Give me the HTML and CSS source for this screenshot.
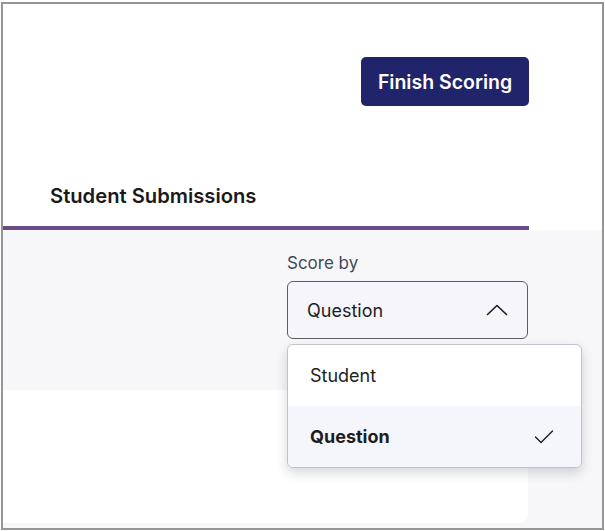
FILE: index.html
```html
<!DOCTYPE html>
<html lang="en">
<head>
<meta charset="utf-8">
<title>Student Submissions</title>
<link rel="stylesheet" href="styles.css">
</head>
<body>
<div class="frame">
  <div class="top">
    <div class="actions">
      <button class="btn-primary" type="button">Finish Scoring</button>
    </div>
    <div class="tabs">
      <div class="tab tab-active">Student Submissions</div>
    </div>
  </div>
  <div class="panel">
    <div class="filters">
      <div class="field">
        <label class="field-label">Score by</label>
        <div class="select-wrap">
          <div class="select">
            <span class="select-value">Question</span>
            <svg class="chevron" width="22" height="12" viewBox="0 0 22 12" aria-hidden="true">
              <polyline points="1.5,10.5 11,1.5 20.5,10.5" fill="none" stroke="#1c1c1c" stroke-width="1.6" stroke-linecap="round" stroke-linejoin="round"/>
            </svg>
          </div>
          <ul class="menu">
            <li class="menu-item">Student</li>
            <li class="menu-item menu-item-selected">
              <span>Question</span>
              <svg class="check" width="20" height="14" viewBox="0 0 20 14" aria-hidden="true">
                <polyline points="1.5,7 7,12.5 18.5,1" fill="none" stroke="#1c1c1c" stroke-width="1.4" stroke-linecap="round" stroke-linejoin="round"/>
              </svg>
            </li>
          </ul>
        </div>
      </div>
    </div>
    <div class="card"></div>
  </div>
</div>
</body>
</html>
```

FILE: styles.css
```css
* {
  box-sizing: border-box;
}

html, body {
  margin: 0;
  padding: 0;
  background: #ffffff;
}

body {
  padding: 2px 1px 1px 1px;
  font-family: Inter, "Noto Sans", "Liberation Sans", sans-serif;
  color: #1d1d1f;
}

.frame {
  width: 603px;
  height: 528px;
  border: 2px solid #959595;
  display: flex;
  flex-direction: column;
  background: #ffffff;
  overflow: hidden;
}

/* header: action button + tab strip */
.top {
  width: 526px;
  display: flex;
  flex-direction: column;
}

.actions {
  display: flex;
  justify-content: flex-end;
  padding-top: 53px;
}

.btn-primary {
  width: 168px;
  height: 49px;
  border: none;
  border-radius: 5px;
  background: #20246a;
  color: #ffffff;
  font-family: inherit;
  font-size: 19.5px;
  font-weight: 600;
  padding: 0;
  cursor: pointer;
}

.tabs {
  margin-top: 78px;
  border-bottom: 4px solid #6a4c85;
  display: flex;
}

.tab {
  padding: 0 0 18px 47px;
  font-size: 20.2px;
  font-weight: 600;
  line-height: 24px;
  color: #1a1a1a;
}

/* grey workspace below the tabs */
.panel {
  flex: 1;
  background: #f7f7f9;
  display: flex;
  flex-direction: column;
}

.filters {
  width: 526px;
  height: 160px;
  display: flex;
  justify-content: flex-end;
  padding: 22px 1px 0 0;
}

.field {
  width: 241px;
  display: flex;
  flex-direction: column;
}

.field-label {
  font-size: 17px;
  line-height: 22px;
  color: #414858;
  margin-bottom: 7px;
}

.select-wrap {
  position: relative;
}

.select {
  height: 58px;
  border: 1px solid #5b5d63;
  border-radius: 6px;
  background: #f5f5fb;
  display: flex;
  align-items: center;
  justify-content: space-between;
  padding: 0 19px 0 19px;
}

.select-value {
  font-size: 18px;
  color: #1d1d1f;
}

.chevron {
  display: block;
}

/* open option list, floats over the content below */
.menu {
  position: absolute;
  top: 63px;
  left: 0;
  width: 295px;
  margin: 0;
  padding: 0;
  list-style: none;
  background: #ffffff;
  border: 1px solid #bfc2cb;
  border-radius: 6px;
  box-shadow: 0 5px 12px rgba(30, 35, 60, 0.18);
  overflow: hidden;
  z-index: 2;
}

.menu-item {
  height: 61px;
  display: flex;
  align-items: center;
  justify-content: space-between;
  padding: 0 27px 0 22px;
  font-size: 18px;
  color: #1d1d1f;
}

.menu-item-selected {
  background: #f5f6fc;
  font-weight: 700;
}

.check {
  display: block;
}

.card {
  width: 525px;
  flex: 1;
  margin-bottom: 5px;
  background: #ffffff;
  border-bottom-right-radius: 9px;
}
```
